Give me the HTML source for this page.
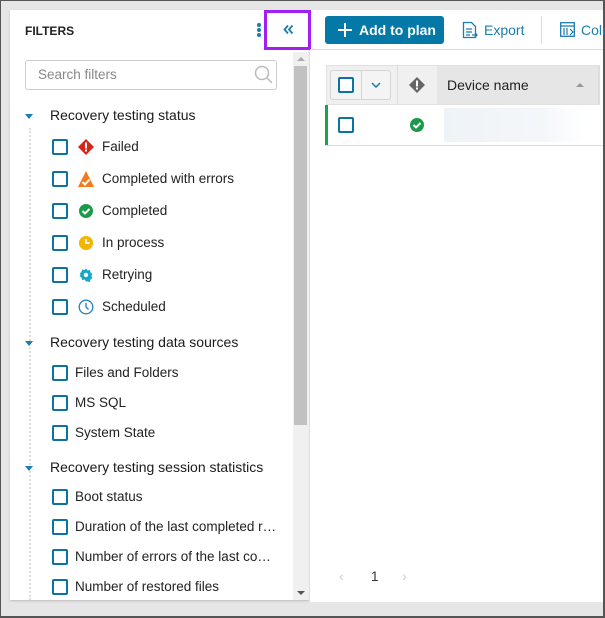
<!DOCTYPE html>
<html><head><meta charset="utf-8"><style>
*{box-sizing:border-box;margin:0;padding:0}
body{width:605px;height:618px;overflow:hidden;background:#e6e6e6;font-family:"Liberation Sans",sans-serif;color:#222;position:relative}
.a{position:absolute}
.frame{left:0;top:0;width:605px;height:618px;border:2px solid #555;border-top:1px solid #555;border-left:1px solid #555}
.cb{position:absolute;width:16px;height:16px;border:2px solid #0a72a5;border-radius:2px;background:#fff}
.t{position:absolute;font-size:13.5px;line-height:16px;white-space:nowrap}
.h{position:absolute;font-size:14px;line-height:16px;white-space:nowrap;color:#1a1a1a}
.tri{position:absolute;width:0;height:0;border-left:4px solid transparent;border-right:4px solid transparent;border-top:5px solid #1a7db0}
</style></head><body>
<div class="a" style="left:10px;top:10px;width:299px;height:590px;background:#fff;box-shadow:0 1px 2px #bbb"></div>
<div class="a" style="left:310px;top:10px;width:293px;height:592px;background:#fff"></div>
<div class="a" style="left:309px;top:10px;width:1px;height:592px;background:#ddd"></div>
<div class="a frame"></div>

<div class="t" style="left:25px;top:23px;font-size:12px;font-weight:bold;color:#222">FILTERS</div>
<div class="a" style="left:257px;top:23px;width:4px;height:4px;border-radius:2px;background:#1a7db0;box-shadow:0 5px 0 #1a7db0,0 10px 0 #1a7db0"></div>
<div class="a" style="left:264px;top:10px;width:47px;height:40px;border:3px solid #a11ff0"></div>
<svg class="a" style="left:283px;top:24px" width="11" height="11" viewBox="0 0 11 11"><path d="M5 1.5L1.5 5.5 5 9.5M9.5 1.5L6 5.5 9.5 9.5" fill="none" stroke="#1a7db0" stroke-width="1.8"/></svg>

<div class="a" style="left:25px;top:60px;width:252px;height:30px;border:1px solid #ccc;border-radius:3px"></div>
<div class="t" style="left:38px;top:67px;color:#888">Search filters</div>
<svg class="a" style="left:254px;top:65px" width="20" height="20" viewBox="0 0 20 20"><circle cx="8" cy="8" r="6.5" fill="none" stroke="#bbb" stroke-width="1.5"/><path d="M13 13l5 5" stroke="#bbb" stroke-width="1.5"/></svg>

<div class="a" style="left:29px;top:128px;height:472px;border-left:2px dotted #ddd"></div>
<div class="a" style="left:293px;top:52px;width:16px;height:548px;background:#f0f0f0"></div>
<div class="a" style="left:294px;top:66px;width:13px;height:359px;background:#c1c1c1"></div>
<div class="a" style="left:297px;top:57px;border-left:4px solid transparent;border-right:4px solid transparent;border-bottom:4px solid #aaa"></div>
<div class="a" style="left:297px;top:591px;border-left:4px solid transparent;border-right:4px solid transparent;border-top:4px solid #555"></div>

<div class="tri" style="left:25px;top:114px"></div><div class="h" style="left:50px;top:107px">Recovery testing status</div>
<div class="cb" style="left:52px;top:139px"></div>
<svg class="a" style="left:77px;top:138px" width="18" height="18" viewBox="0 0 18 18"><path d="M9 1L17 9 9 17 1 9Z" fill="#d4261b"/><rect x="8" y="4.5" width="2" height="6" fill="#fff"/><rect x="8" y="11.5" width="2" height="2" fill="#fff"/></svg>
<div class="t" style="left:102px;top:139px">Failed</div>
<div class="cb" style="left:52px;top:171px"></div>
<svg class="a" style="left:77px;top:170px" width="18" height="18" viewBox="0 0 18 18"><path d="M9 1L17 17H1Z" fill="#f27a1a"/><path d="M5.5 12l2.5 2.5 4.5-5" fill="none" stroke="#fff" stroke-width="2"/></svg>
<div class="t" style="left:102px;top:171px">Completed with errors</div>
<div class="cb" style="left:52px;top:203px"></div>
<svg class="a" style="left:79px;top:204px" width="14" height="14" viewBox="0 0 14 14"><circle cx="7" cy="7" r="7" fill="#1a9a4a"/><path d="M3.5 7l2.5 2.5 4.5-4.5" fill="none" stroke="#fff" stroke-width="2"/></svg>
<div class="t" style="left:102px;top:203px">Completed</div>
<div class="cb" style="left:52px;top:235px"></div>
<svg class="a" style="left:79px;top:236px" width="14" height="14" viewBox="0 0 14 14"><circle cx="7" cy="7" r="7" fill="#f5b400"/><path d="M7 3v4h3.5" fill="none" stroke="#fff" stroke-width="1.8"/></svg>
<div class="t" style="left:102px;top:235px">In process</div>
<div class="cb" style="left:52px;top:267px"></div>
<svg class="a" style="left:79px;top:268px" width="14" height="14" viewBox="0 0 14 14"><path d="M7 0.5l1.5 2 2.5-.5.5 2.5 2 1.5-1.2 2 1.2 2-2 1.5-.5 2.5-2.5-.5L7 13.5l-1.5-2-2.5.5-.5-2.5-2-1.5 1.2-2L.5 5.5l2-1.5.5-2.5 2.5.5Z" fill="#17a8c8"/><circle cx="7" cy="7" r="2.2" fill="#fff"/></svg>
<div class="t" style="left:102px;top:267px">Retrying</div>
<div class="cb" style="left:52px;top:299px"></div>
<svg class="a" style="left:78px;top:299px" width="16" height="16" viewBox="0 0 16 16"><circle cx="8" cy="8" r="6.8" fill="none" stroke="#2a86c2" stroke-width="1.4"/><path d="M8 4v4l2.5 2.5" fill="none" stroke="#2a86c2" stroke-width="1.4"/></svg>
<div class="t" style="left:102px;top:299px">Scheduled</div>

<div class="tri" style="left:25px;top:341px"></div><div class="h" style="left:50px;top:334px">Recovery testing data sources</div>
<div class="cb" style="left:52px;top:365px"></div><div class="t" style="left:75px;top:365px">Files and Folders</div>
<div class="cb" style="left:52px;top:395px"></div><div class="t" style="left:75px;top:395px">MS SQL</div>
<div class="cb" style="left:52px;top:425px"></div><div class="t" style="left:75px;top:425px">System State</div>

<div class="tri" style="left:25px;top:466px"></div><div class="h" style="left:50px;top:459px">Recovery testing session statistics</div>
<div class="cb" style="left:52px;top:489px"></div><div class="t" style="left:75px;top:489px">Boot status</div>
<div class="cb" style="left:52px;top:519px"></div><div class="t" style="left:75px;top:519px">Duration of the last completed r…</div>
<div class="cb" style="left:52px;top:549px"></div><div class="t" style="left:75px;top:549px">Number of errors of the last co…</div>
<div class="cb" style="left:52px;top:579px"></div><div class="t" style="left:75px;top:579px">Number of restored files</div>

<!-- right -->
<div class="a" style="left:325px;top:16px;width:119px;height:28px;background:#0479a8;border-radius:3px"></div>
<svg class="a" style="left:337px;top:22px" width="16" height="16" viewBox="0 0 16 16"><path d="M8 1v14M1 8h14" stroke="#fff" stroke-width="2"/></svg>
<div class="t" style="left:359px;top:22px;color:#fff;font-weight:bold;font-size:14px">Add to plan</div>
<svg class="a" style="left:462px;top:21px" width="16" height="18" viewBox="0 0 16 18"><path d="M1.5 1.5h8l4 4v11h-12Z" fill="none" stroke="#1a7db0" stroke-width="1.3"/><path d="M4 8h6M4 11h6M4 14h4M10 14h5M13 12l2 2-2 2" fill="none" stroke="#1a7db0" stroke-width="1.3"/></svg>
<div class="t" style="left:484px;top:22px;color:#1a7db0;font-size:14px">Export</div>
<div class="a" style="left:541px;top:16px;width:1px;height:28px;background:#ddd"></div>
<svg class="a" style="left:560px;top:22px" width="15" height="15" viewBox="0 0 15 15"><rect x="0.7" y="0.7" width="13.6" height="13.6" fill="none" stroke="#1a7db0" stroke-width="1.3"/><path d="M1 4h13M4 6v7M7 6v7M10 7l3 3-3 3" fill="none" stroke="#1a7db0" stroke-width="1.2"/></svg>
<div class="t" style="left:581px;top:22px;color:#1a7db0;font-size:14px">Colu</div>
<div class="a" style="left:310px;top:49px;width:293px;height:1px;background:#ddd"></div>

<div class="a" style="left:326px;top:65px;width:274px;height:40px;background:#f0f0f0;border:1px solid #e0e0e0"></div>
<div class="a" style="left:437px;top:66px;width:161px;height:38px;background:#e6e6e6"></div>
<div class="a" style="left:397px;top:66px;width:1px;height:38px;background:#ddd"></div>
<div class="a" style="left:598px;top:66px;width:1px;height:38px;background:#ddd"></div>
<div class="a" style="left:330px;top:70px;width:61px;height:30px;border:1px solid #d5d5d5;border-radius:3px;background:#f4f4f4"></div>
<div class="a" style="left:361px;top:71px;width:1px;height:28px;background:#d5d5d5"></div>
<div class="cb" style="left:338px;top:77px"></div>
<svg class="a" style="left:371px;top:82px" width="10" height="6" viewBox="0 0 10 6"><path d="M1 1l4 4 4-4" fill="none" stroke="#1a7db0" stroke-width="1.5"/></svg>
<svg class="a" style="left:408px;top:76px" width="18" height="18" viewBox="0 0 18 18"><path d="M9 1L17 9 9 17 1 9Z" fill="#666"/><rect x="8" y="4.5" width="2" height="6" fill="#fff"/><rect x="8" y="11.5" width="2" height="2" fill="#fff"/></svg>
<div class="t" style="left:447px;top:77px;font-size:14px">Device name</div>
<div class="a" style="left:576px;top:83px;border-left:4px solid transparent;border-right:4px solid transparent;border-bottom:4px solid #999"></div>

<div class="a" style="left:325px;top:105px;width:3px;height:41px;background:#1aa34a"></div>
<div class="a" style="left:325px;top:145px;width:278px;height:1px;background:#ddd"></div>
<div class="cb" style="left:338px;top:117px"></div>
<svg class="a" style="left:410px;top:118px" width="14" height="14" viewBox="0 0 14 14"><circle cx="7" cy="7" r="7" fill="#1a9a4a"/><path d="M3.5 7l2.5 2.5 4.5-4.5" fill="none" stroke="#fff" stroke-width="2"/></svg>
<div class="a" style="left:444px;top:108px;width:142px;height:34px;background:linear-gradient(90deg,#eef3f7,#f4f7fa 70%,#fff)"></div>

<div class="t" style="left:339px;top:568px;color:#ccc;font-size:14px">‹</div>
<div class="t" style="left:371px;top:569px;color:#333">1</div>
<div class="t" style="left:402px;top:568px;color:#ccc;font-size:14px">›</div>
</body></html>
